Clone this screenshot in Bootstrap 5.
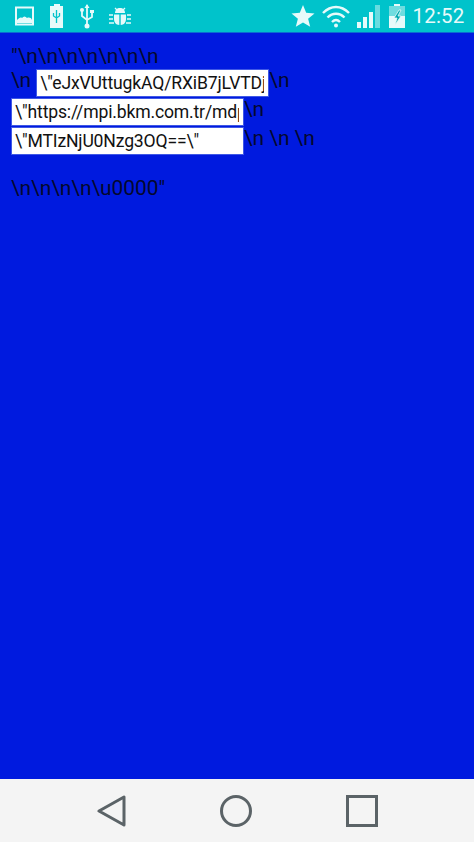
<!DOCTYPE html>
<html lang="en">
<head>
<meta charset="utf-8">
<title>Screen</title>
<link href="https://cdn.jsdelivr.net/npm/bootstrap@5.3.0/dist/css/bootstrap.min.css" rel="stylesheet">
<style>
html,body{height:842px;overflow:hidden}
body{background:#001adf;font-family:Roboto,"Liberation Sans",sans-serif}
.stat-bar{height:33px;background:#00c3cb;border-bottom:1px solid #0a6fd0;padding:0 9.500px 0 14px}
.stat-bar svg{display:block;flex:none}
.stat-time{font-size:20.5px;color:#e6fafa;line-height:1;letter-spacing:.2px}
.web-body{padding:11px 11px 0;color:#04082e;font-size:20.9px;line-height:normal;white-space:nowrap}
.web-input{width:233px;height:28px;border:1px solid #3f58e6;background:#fff;color:#111;font:17.6px Roboto,sans-serif;letter-spacing:-.17px;padding:0 4px 0 3px;margin:1px 0 0;vertical-align:top;outline:0;border-radius:0;display:inline-block}
.tail-line{margin-top:21px}
.sys-bar{height:63px;background:#f4f4f4;padding-left:97px}
.sys-bar svg{display:block;flex:none}
</style>
</head>
<body class="d-flex flex-column">
<div class="stat-bar d-flex align-items-center justify-content-between">
 <div class="d-flex align-items-center">
  <svg width="22" height="22" viewBox="0 0 22 22" style="margin-right:12px"><rect x="2" y="2.500" width="17" height="17" fill="none" stroke="#e6fafa" stroke-width="2"/><path d="M3 18v-3c2-2 3.500-3 5-2 1.500-2 3.500-2 5 0 2-1 4-.5 5 2v3z" fill="#e6fafa"/></svg>
  <svg width="18" height="26" viewBox="0 0 18 26" style="margin-right:13px"><path d="M6 1h6v2h3v22H2V3h4z" fill="#e6fafa"/><path d="M8.500 7v13M5.500 10v3l3 2 3-2v-3" fill="none" stroke="#00c3cb" stroke-width="1.300"/></svg>
  <svg width="16" height="26" viewBox="0 0 16 26" style="margin-right:13px"><path d="M8 2v22M3 8v5l5 4 5-3V9" fill="none" stroke="#e6fafa" stroke-width="1.800"/><path d="M8 1l2.500 4h-5zM11 7h4v3h-4z" fill="#e6fafa"/><circle cx="3" cy="7" r="2" fill="#e6fafa"/><circle cx="8" cy="23" r="2.500" fill="#e6fafa"/></svg>
  <svg width="24" height="22" viewBox="0 0 24 22"><path d="M7 8c0-3 2-5 5-5s5 2 5 5z" fill="#e6fafa"/><path d="M7 3l2 2M17 3l-2 2" stroke="#e6fafa" stroke-width="1.300"/><path d="M6 9.500h5.300V20C8 20 6 17 6 14zM12.700 9.500H18V14c0 3-2 6-5.300 6z" fill="#e6fafa"/><path d="M1 10h4M1 14h4M1 18h5M19 10h4M19 14h4M18 18h5" stroke="#e6fafa" stroke-width="1.500"/></svg>
 </div>
 <div class="d-flex align-items-center">
  <svg width="24" height="24" viewBox="0 0 24 24" style="margin-right:6px"><path d="M12 1l3.200 7.800 8.300.6-6.400 5.300 2.100 8.100L12 18.400l-7.200 4.400 2.100-8.100L.5 9.400l8.300-.6z" fill="#e6fafa"/></svg>
  <svg width="30" height="24" viewBox="0 0 30 24" style="margin-right:5px"><g fill="none" stroke="#e6fafa" stroke-width="2.400"><path d="M2 9c8-8 18-8 26 0"/><path d="M6.500 13.500c5-5 12-5 17 0"/><path d="M11 18c2.500-2.500 5.500-2.500 8 0"/></g><circle cx="15" cy="21.500" r="2" fill="#e6fafa"/></svg>
  <svg width="26" height="26" viewBox="0 0 26 26" style="margin-right:6px"><path d="M1 19h4v6H1zM7 14h4v11H7zM13 9h4v16h-4z" fill="#e6fafa"/><path d="M19 2h5v23h-5z" fill="#e6fafa" opacity=".45"/></svg>
  <svg width="18" height="26" viewBox="0 0 18 26" style="margin-right:6px"><path d="M6 1h6v2h5v22H1V3h5z" fill="#e6fafa"/><path d="M1 3h16v10H1z" fill="#6fdcdf"/><path d="M11 7l-5 8h3l-2 7 6-9h-3l3-6z" fill="#00a9b0" stroke="#e6fafa" stroke-width=".8"/></svg>
  <span class="stat-time">12:52</span>
 </div>
</div>
<main class="web-body flex-grow-1">"\n\n\n\n\n\n\n<br>\n <input class="web-input" value='\"eJxVUttugkAQ/RXiB7jLVTDjsUxyz' readonly>\n<br><input class="web-input" value='\"https://mpi.bkm.com.tr/mdpayacs' readonly>\n<br><input class="web-input" value='\"MTIzNjU0Nzg3OQ==\"' readonly>\n \n \n<div class="tail-line">\n\n\n\n\u0000"</div></main>
<nav class="sys-bar d-flex align-items-center">
 <svg width="30" height="32" viewBox="0 0 30 32" style="margin-right:93px"><path d="M27 2v28L2 16z" fill="none" stroke="#5b6367" stroke-width="3" stroke-linejoin="round"/></svg>
 <svg width="32" height="32" viewBox="0 0 32 32" style="margin-right:94px"><circle cx="16" cy="16" r="14.500" fill="none" stroke="#5b6367" stroke-width="3"/></svg>
 <svg width="32" height="32" viewBox="0 0 32 32"><rect x="1.500" y="1.500" width="29" height="29" fill="none" stroke="#5b6367" stroke-width="3"/></svg>
</nav>
<script src="https://cdn.jsdelivr.net/npm/bootstrap@5.3.0/dist/js/bootstrap.bundle.min.js"></script>
</body>
</html>
